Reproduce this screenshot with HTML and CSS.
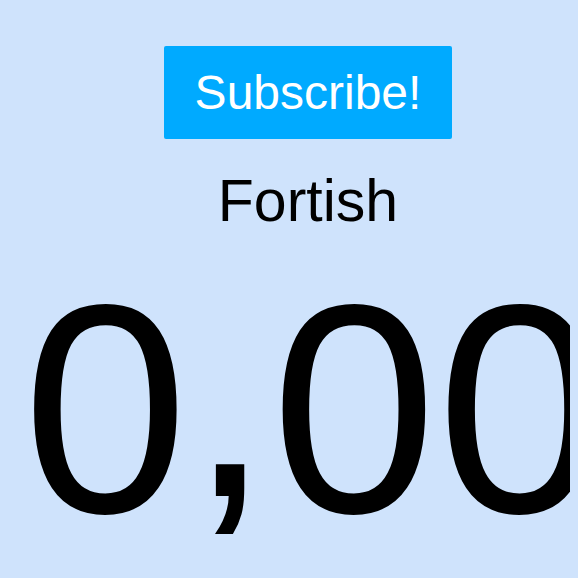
FILE: index.html
```html
<!DOCTYPE html>
<html lang="en">
<head>
  <meta charset="UTF-8">
  <meta name="viewport" content="width=device-width, initial-scale=1.0">
  <title>Subscriber count</title>
  <link rel="stylesheet" href="styles.css">
</head>
<body>
  <div class="page">
    <button class="subscribe">Subscribe!</button>
    <div class="name">Fortish</div>
    <div class="count">
      <span class="count-num">20<span class="count-sep">,</span>000</span>
    </div>
  </div>
</body>
</html>
```

FILE: styles.css
```css
html {
  overflow: hidden;
}
body {
  margin: 8px;
  background: #cfe3fc;
  font-family: "Liberation Sans", Arial, sans-serif;
  color: #000;
}
.page {
  width: 600px;
  text-align: center;
}
.subscribe {
  margin-top: 38px;
  padding: 19px 31px;
  font-family: inherit;
  font-size: 48px;
  line-height: normal;
  color: #fff;
  background: #00aaff;
  border: none;
  border-radius: 2px;
  cursor: pointer;
}
.name {
  margin-top: 28px;
  font-size: 59px;
}
.count {
  display: flex;
  justify-content: center;
  margin-top: 25px;
  padding-left: 9px;
  font-size: 298px;
  line-height: 1;
  white-space: nowrap;
}
.count-sep {
  line-height: 0;
  vertical-align: 16px;
}
```
